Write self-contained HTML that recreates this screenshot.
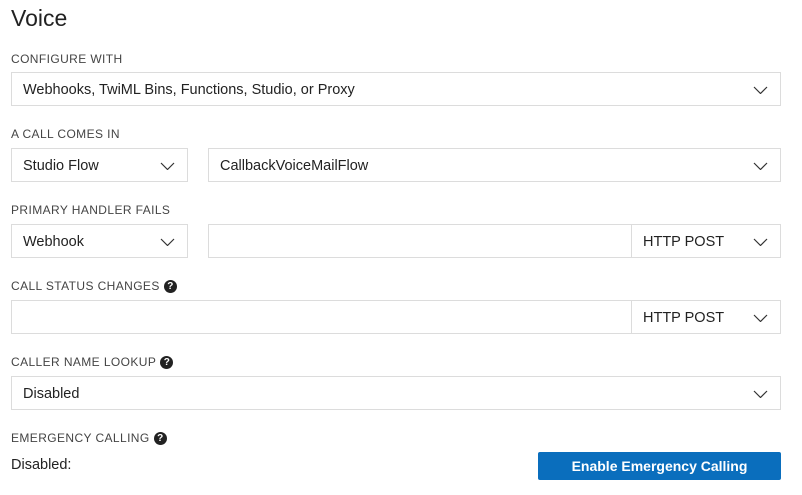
<!DOCTYPE html>
<html><head><style>
body{margin:0;width:802px;height:495px;background:#fff;font-family:"Liberation Sans",sans-serif;color:#222;position:relative;overflow:hidden}
.a{position:absolute}
h1{position:absolute;left:11px;top:5px;margin:0;font-size:23px;font-weight:normal;color:#222}
.l{position:absolute;left:11px;font-size:12px;color:#444;letter-spacing:.4px}
.b{position:absolute;box-sizing:border-box;border:1px solid #dcdcdc;height:34px;font-size:14.5px;line-height:34px;padding-left:11px;background:#fff}
.c{position:absolute;right:12px;top:13px;width:15px;height:8px}
.q{display:inline-block;width:13px;height:13px;border-radius:50%;background:#222;color:#fff;font-size:10px;font-weight:bold;line-height:13px;text-align:center;vertical-align:1px;margin-left:4px;letter-spacing:0}
</style></head><body>
<h1>Voice</h1>
<div class="l" style="top:52px">CONFIGURE WITH</div>
<div class="b" style="left:11px;top:72px;width:770px">Webhooks, TwiML Bins, Functions, Studio, or Proxy<svg class="c" viewBox="0 0 15 8"><path d="M1 1l6.5 6.5L14 1" fill="none" stroke="#333" stroke-width="1.2"/></svg></div>
<div class="l" style="top:127px">A CALL COMES IN</div>
<div class="b" style="left:11px;top:148px;width:177px">Studio Flow<svg class="c" viewBox="0 0 15 8"><path d="M1 1l6.5 6.5L14 1" fill="none" stroke="#333" stroke-width="1.2"/></svg></div>
<div class="b" style="left:208px;top:148px;width:573px">CallbackVoiceMailFlow<svg class="c" viewBox="0 0 15 8"><path d="M1 1l6.5 6.5L14 1" fill="none" stroke="#333" stroke-width="1.2"/></svg></div>
<div class="l" style="top:203px">PRIMARY HANDLER FAILS</div>
<div class="b" style="left:11px;top:224px;width:177px">Webhook<svg class="c" viewBox="0 0 15 8"><path d="M1 1l6.5 6.5L14 1" fill="none" stroke="#333" stroke-width="1.2"/></svg></div>
<div class="b" style="left:208px;top:224px;width:424px"></div>
<div class="b" style="left:631px;top:224px;width:150px">HTTP POST<svg class="c" viewBox="0 0 15 8"><path d="M1 1l6.5 6.5L14 1" fill="none" stroke="#333" stroke-width="1.2"/></svg></div>
<div class="l" style="top:279px">CALL STATUS CHANGES<span class="q">?</span></div>
<div class="b" style="left:11px;top:300px;width:621px"></div>
<div class="b" style="left:631px;top:300px;width:150px">HTTP POST<svg class="c" viewBox="0 0 15 8"><path d="M1 1l6.5 6.5L14 1" fill="none" stroke="#333" stroke-width="1.2"/></svg></div>
<div class="l" style="top:355px">CALLER NAME LOOKUP<span class="q">?</span></div>
<div class="b" style="left:11px;top:376px;width:770px">Disabled<svg class="c" viewBox="0 0 15 8"><path d="M1 1l6.5 6.5L14 1" fill="none" stroke="#333" stroke-width="1.2"/></svg></div>
<div class="l" style="top:431px">EMERGENCY CALLING<span class="q">?</span></div>
<div class="a" style="left:11px;top:457px;font-size:14.5px">Disabled:</div>
<div class="a" style="left:538px;top:452px;width:243px;height:28px;background:#0a6ebd;border-radius:2px;color:#fff;font-size:14px;font-weight:bold;text-align:center;line-height:28px">Enable Emergency Calling</div>
</body></html>
